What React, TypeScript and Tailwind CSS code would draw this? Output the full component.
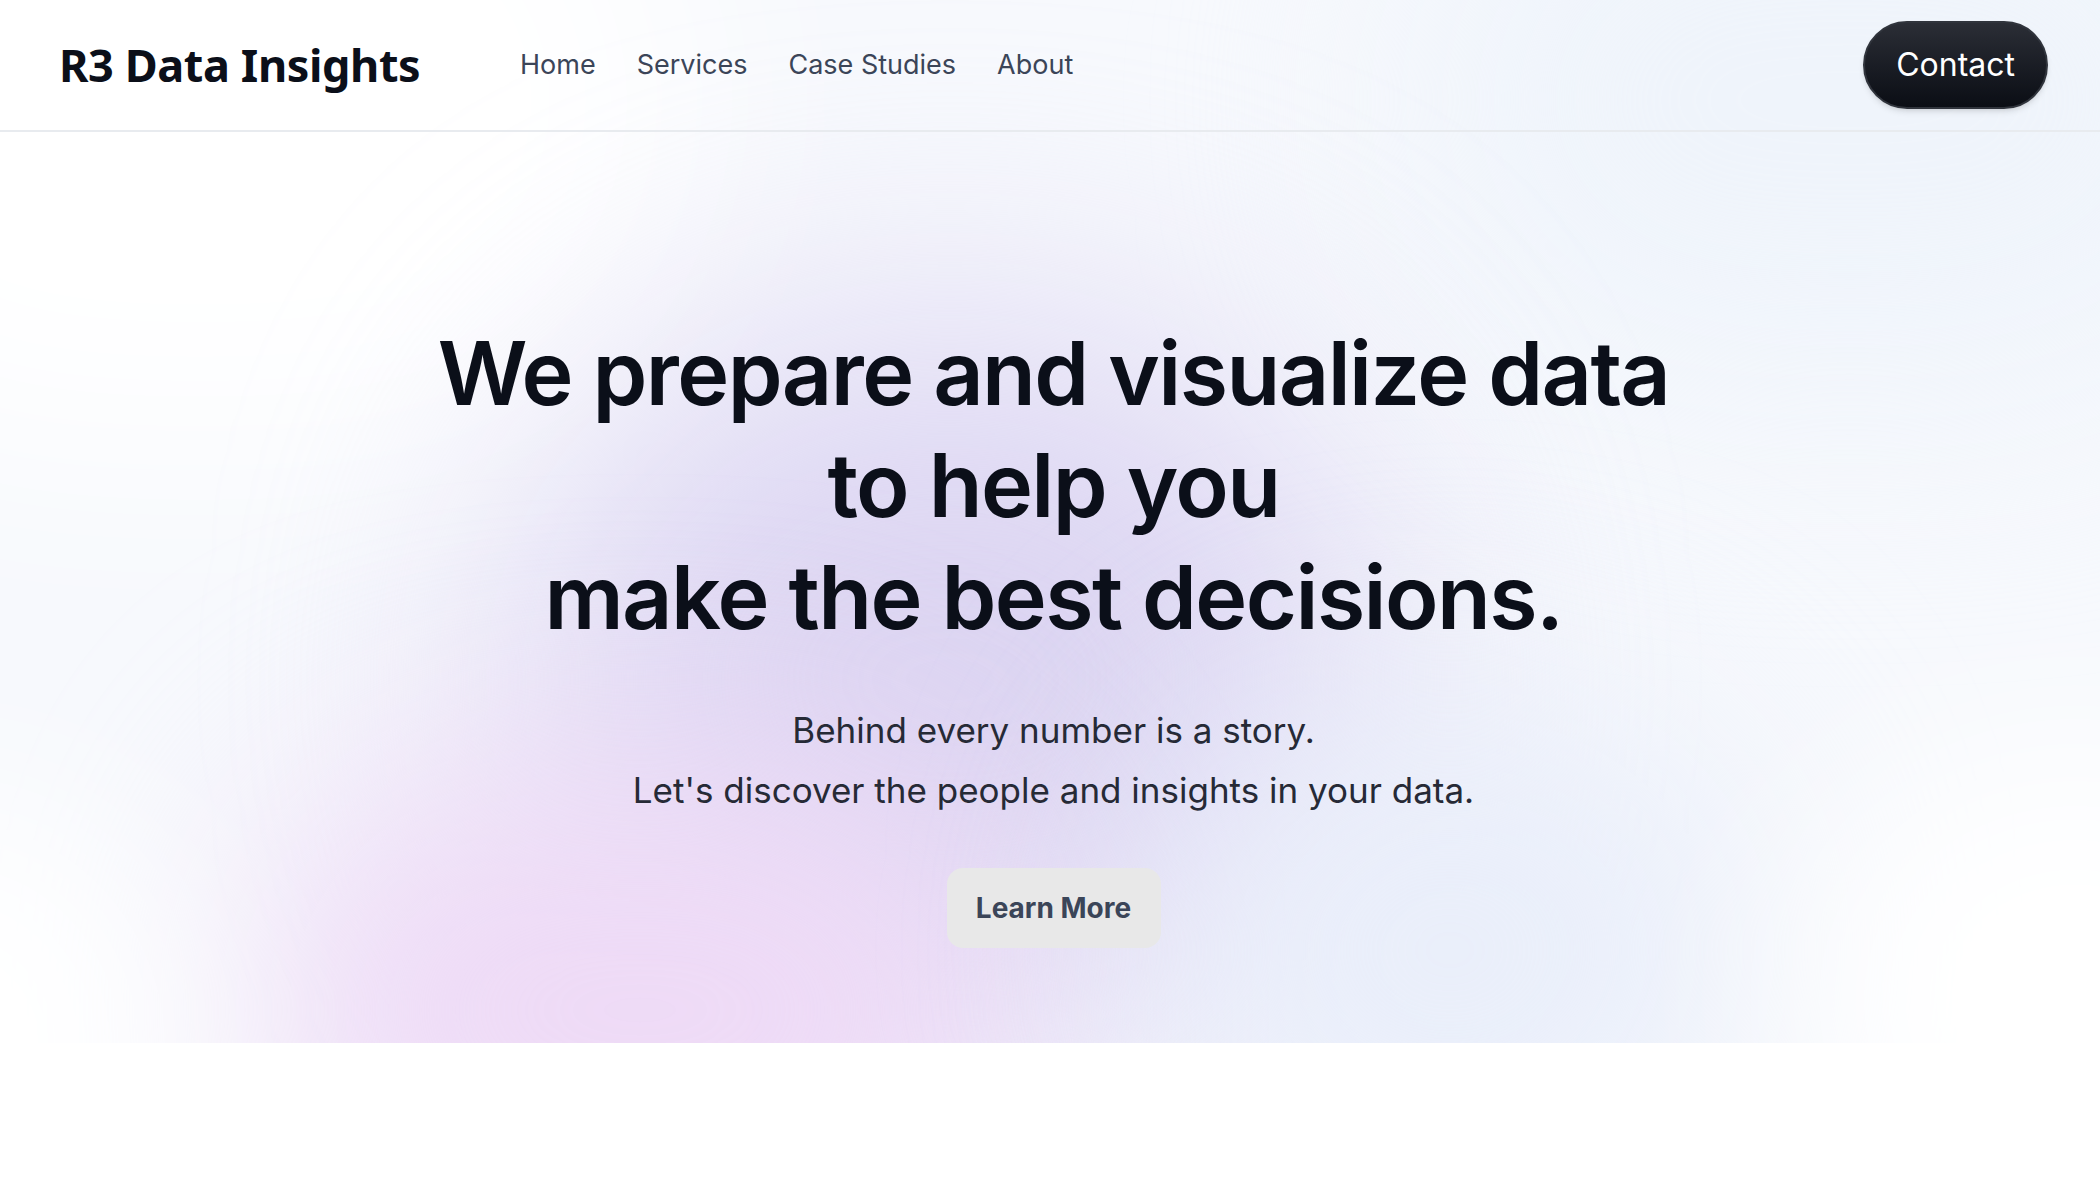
import React from "react";

export default function App() {
  return (
    <div className="min-h-screen bg-white" style={{ fontFamily: "Inter, 'Noto Sans', sans-serif" }}>
      <div className="relative overflow-hidden bg-[#f7f9fd]">
        {/* decorative background blobs */}
        <div className="pointer-events-none absolute inset-0">
          <div className="absolute left-[-300px] top-[-250px] h-[700px] w-[1000px] rounded-full bg-white blur-[120px]" />
          <div className="absolute right-[-200px] top-[-200px] h-[600px] w-[900px] rounded-full bg-[#eff4fb] blur-[120px]" />
          <div className="absolute left-[520px] top-[330px] h-[700px] w-[860px] rounded-full bg-[#dcd5f2] blur-[140px]" />
          <div className="absolute left-[260px] top-[760px] h-[500px] w-[760px] rounded-full bg-[#eedaf6] blur-[120px]" />
          <div className="absolute left-[1150px] top-[700px] h-[500px] w-[600px] rounded-full bg-[#e9eefa] blur-[120px]" />
          <div className="absolute left-[-280px] top-[800px] h-[500px] w-[460px] rounded-full bg-white blur-[100px]" />
          <div className="absolute right-[-250px] top-[750px] h-[500px] w-[550px] rounded-full bg-white blur-[100px]" />
        </div>

        <header className="relative flex h-[132px] items-center border-b-2 border-[#e8ebef] pl-[59px] pr-[52px]">
          <div
            className="w-[364px] whitespace-nowrap text-[45px] font-bold tracking-[-0.4px] text-[#0b0f19]"
            style={{ fontFamily: "'Noto Sans', sans-serif" }}
          >
            R3 Data Insights
          </div>
          <nav className="ml-[97px] flex items-center gap-[41px] text-[27px] text-[#3b4558]">
            <a>Home</a>
            <a>Services</a>
            <a>Case Studies</a>
            <a>About</a>
          </nav>
          <div className="ml-auto">
            <button className="h-[88px] rounded-full border-2 border-[#30343c] bg-gradient-to-b from-[#2b2e36] to-[#0b0e15] px-[31px] text-[32px] text-white shadow-md">
              Contact
            </button>
          </div>
        </header>

        <section className="relative flex flex-col items-center pb-[95px] pl-[7px] pt-[185px] text-center">
          <h1 className="text-[88px] font-semibold leading-[112px] tracking-[-1.6px] text-[#0b0f19]">
            We prepare and visualize data
            <br />
            to help you
            <br />
            make the best decisions.
          </h1>
          <p className="mt-[47px] text-[35px] leading-[60px] text-[#262a36]">
            Behind every number is a story.
            <br />
            Let's discover the people and insights in your data.
          </p>
          <button className="mt-[48px] h-[80px] w-[214px] rounded-[16px] bg-[#e8e8e8] text-[28px] font-bold text-[#3b4558]">
            Learn More
          </button>
        </section>
      </div>
    </div>
  );
}
